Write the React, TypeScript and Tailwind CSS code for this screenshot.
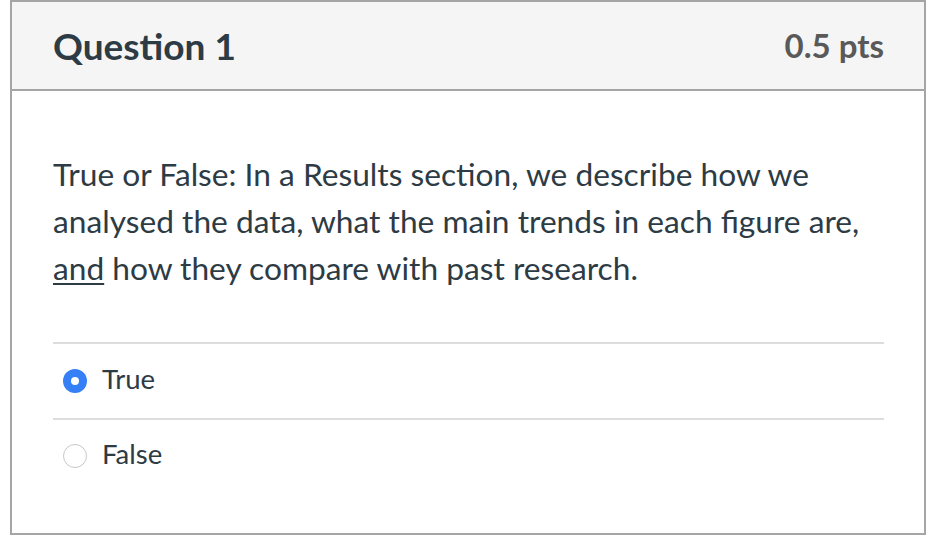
export default function App() {
  return (
    <div className="w-[930px] h-[540px] bg-white" style={{ fontFamily: "Lato, 'Noto Sans', sans-serif" }}>
      <div className="ml-[10px] w-[916px] h-[535px] border-2 border-[#a5a5a5] flex flex-col">
        <div className="h-[89px] bg-[#f5f5f5] border-b-2 border-[#a5a5a5] flex items-center justify-between pl-[41px] pr-[40px] shrink-0">
          <div className="text-[37px] font-bold text-[#2d3b45] leading-none">Question 1</div>
          <div className="text-[33px] font-bold text-[#595959] leading-none">0.5 pts</div>
        </div>
        <div className="pl-[41px] pr-[40px]">
          <p className="mt-[60px] text-[31.7px] leading-[47px] text-[#2d3b45] whitespace-nowrap">
            True or False: In a Results section, we describe how we
            <br />
            analysed the data, what the main trends in each figure are,
            <br />
            <span className="underline decoration-[2px] underline-offset-[3px]">and</span> how they compare with past research.
          </p>
          <div className="mt-[50px] border-t-2 border-[#dddddd]">
            <div className="h-[74px] flex items-center">
              <span className="ml-[10px] w-[24px] h-[24px] rounded-full bg-[#3580f6] flex items-center justify-center">
                <span className="w-[8px] h-[8px] rounded-full bg-white" />
              </span>
              <span className="ml-[15px] text-[27.5px] text-[#2d3b45] mt-[-4px]">True</span>
            </div>
            <div className="border-t-2 border-[#dddddd] h-[74px] flex items-center">
              <span className="ml-[10px] w-[24px] h-[24px] rounded-full border border-[#c8c8c8] bg-white" />
              <span className="ml-[15px] text-[27.5px] text-[#2d3b45] mt-[-4px]">False</span>
            </div>
          </div>
        </div>
      </div>
    </div>
  );
}
